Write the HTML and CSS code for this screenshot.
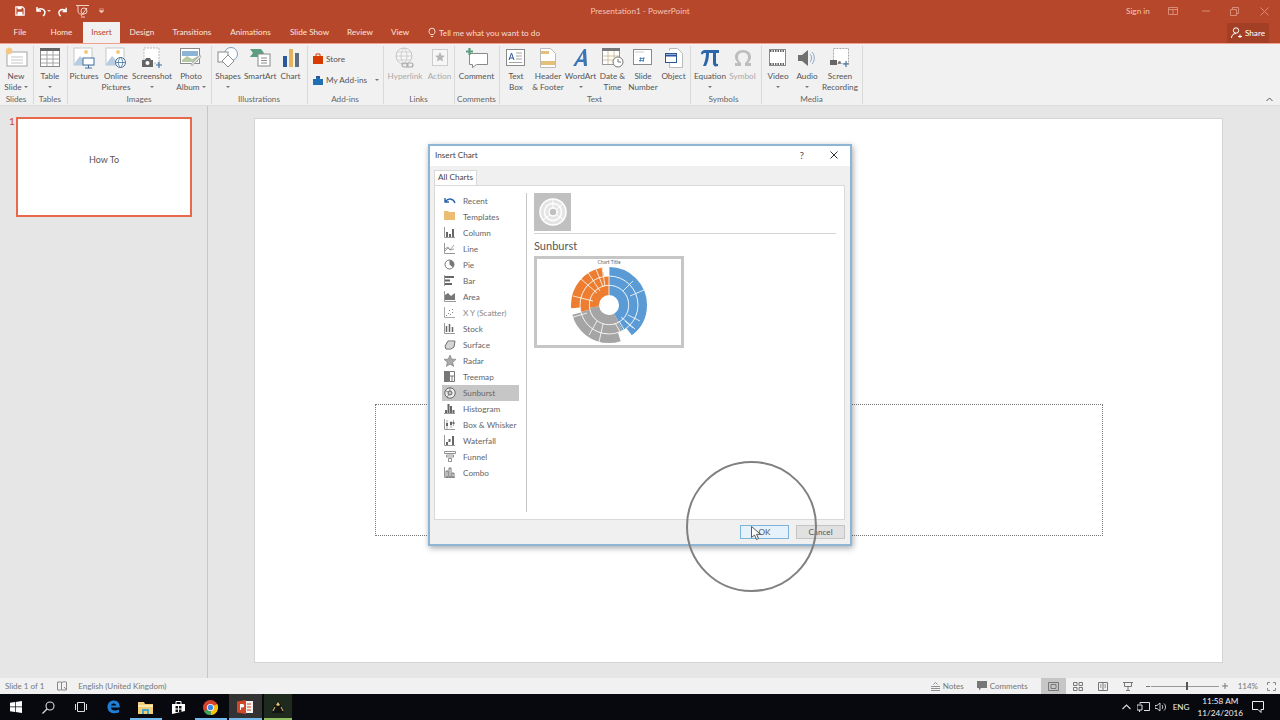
FILE: index.html
```html
<!DOCTYPE html>
<html lang="en">
<head>
  <meta charset="UTF-8">
  <title>Presentation1 - PowerPoint</title>
  <link rel="stylesheet" href="styles.css">
</head>
<body>
  <div class="title-bar">
    <div class="qat">
      <svg class="qat-save" width="10" height="10" viewBox="0 0 12 12"><path d="M1 1h8l2 2v8H1z" fill="none" stroke="#fff" stroke-width="1.4"/><path d="M3 1h5v3H3zM3 7h6v4H3z" fill="#fff"/></svg>
      <svg class="qat-undo" width="18" height="12" viewBox="0 0 18 12"><path d="M3 2v4h4M3 6c2-3 7-3 8 1 0 1.500-.5 3-2 4" fill="none" stroke="#fff" stroke-width="1.5"/><path d="M13 5h4l-2 2z" fill="#f3cfc4"/></svg>
      <svg class="qat-redo" width="11" height="11" viewBox="0 0 12 12"><path d="M10 2v4H6M10 6C8 3 3 3 2 7c0 1.500.5 3 2 4" fill="none" stroke="#fff" stroke-width="1.5"/></svg>
      <svg class="qat-show" width="14" height="14" viewBox="0 0 14 14"><path d="M0 1.500h13M2 2v5c0 2 1 3 3 3h3" fill="none" stroke="#f3cfc4"/><circle cx="8" cy="7" r="3" fill="none" stroke="#f3cfc4"/><path d="M5 12l6-8M5 13h4" stroke="#f3cfc4"/></svg>
      <svg class="qat-more" width="5" height="6" viewBox="0 0 6 7"><path d="M0 1h6M0 3h6l-3 3z" fill="#f3cfc4" stroke="#f3cfc4" stroke-width=".6"/></svg>
    </div>
    <div class="doc-title">Presentation1 - PowerPoint</div>
    <div class="win-controls">
      <span class="sign-in">Sign in</span>
      <svg class="win-ribbon" width="10" height="8" viewBox="0 0 10 8"><path d="M.5.500h9v7h-9zM.5 2.500h9M5 2.500v5" fill="none" stroke="#d98d79"/></svg>
      <svg class="win-min" width="8" height="2" viewBox="0 0 8 2"><path d="M0 1h8" stroke="#d98d79"/></svg>
      <svg class="win-max" width="9" height="9" viewBox="0 0 9 9"><path d="M.5 2.500h6v6h-6zM2.500 2.500v-2h6v6h-2" fill="none" stroke="#d98d79"/></svg>
      <svg class="win-close" width="9" height="9" viewBox="0 0 9 9"><path d="M.5.500l8 8M8.500.500l-8 8" stroke="#d98d79"/></svg>
    </div>
  </div>

  <div class="tab-bar">
    <span class="tab tab-file">File</span>
    <span class="tab tab-home">Home</span>
    <span class="tab tab-insert">Insert</span>
    <span class="tab tab-design">Design</span>
    <span class="tab tab-transitions">Transitions</span>
    <span class="tab tab-animations">Animations</span>
    <span class="tab tab-show">Slide Show</span>
    <span class="tab tab-review">Review</span>
    <span class="tab tab-view">View</span>
    <span class="tell-me">
      <svg width="8" height="11" viewBox="0 0 8 11"><path d="M2.500 7.500C1.500 6.500 1 5.500 1 4.200a3 3 0 0 1 6 0c0 1.300-.5 2.300-1.500 3.300zM2.800 9.500h2.400" fill="none" stroke="#f6dcd4"/></svg>
      Tell me what you want to do
    </span>
    <span class="share">
      <svg width="11" height="11" viewBox="0 0 11 11"><circle cx="5" cy="3.500" r="2.700" fill="none" stroke="#fff"/><path d="M.5 11c0-3 2-4.500 4.500-4.500M7 9.500h4M9 7.500v3.500" fill="none" stroke="#fff"/></svg>
      Share
    </span>
  </div>

  <div class="ribbon">
    <div class="group">
      <div class="group-items">
        <div class="rb w32">
          <svg class="rb-icon" width="24" height="22" viewBox="0 0 24 22"><rect x="3" y="5" width="20" height="14" fill="#fff" stroke="#a5a5a5"/><path d="M7 10h12M7 13h12M7 16h12" stroke="#c4c4c4"/><circle cx="5" cy="4" r="3" fill="#f5c77e"/><path d="M5 0v8M1 4h8M2 1l6 6M8 1L2 7" stroke="#f5c77e" stroke-width=".7"/></svg>
          <span>New<br>Slide <i class="caret"></i></span>
        </div>
      </div>
      <div class="group-label">Slides</div>
    </div>
    <div class="group">
      <div class="group-items">
        <div class="rb w32">
          <svg class="rb-icon" width="20" height="20" viewBox="0 0 20 20"><rect x=".5" y=".5" width="19" height="18" fill="#fff" stroke="#8a8a8a"/><path d="M0 1.500h20" stroke="#666" stroke-width="3"/><path d="M1 7h18M1 11h18M1 15h18M7 3v15M13 3v15" stroke="#a5a5a5"/></svg>
          <span>Table<br><i class="caret"></i></span>
        </div>
      </div>
      <div class="group-label">Tables</div>
    </div>
    <div class="group">
      <div class="group-items">
        <div class="rb w32">
          <svg class="rb-icon" width="22" height="22" viewBox="0 0 22 22"><rect x="1" y="1" width="18" height="17" fill="#fff" stroke="#c8c8c8"/><path d="M1 17l6-8 5 5 3-2 4 4v2H1z" fill="#b8cde2"/><circle cx="13" cy="5" r="2" fill="#f5c77e"/><rect x="10" y="11" width="11" height="7" fill="#fff" stroke="#41719c"/><path d="M15.500 18v3M12 21h7" stroke="#41719c"/></svg>
          <span>Pictures</span>
        </div>
        <div class="rb w32">
          <svg class="rb-icon" width="22" height="22" viewBox="0 0 22 22"><rect x="1" y="1" width="18" height="17" fill="#fff" stroke="#c8c8c8"/><path d="M1 17l6-8 5 5 3-2 4 4v2H1z" fill="#b8cde2"/><circle cx="13" cy="5" r="2" fill="#f5c77e"/><circle cx="15.500" cy="15.500" r="5" fill="#fff" stroke="#41719c"/><path d="M10.500 15.500h10M15.500 10.500c-3 3-3 7 0 10M15.500 10.500c3 3 3 7 0 10" fill="none" stroke="#41719c" stroke-width=".8"/></svg>
          <span>Online<br>Pictures</span>
        </div>
        <div class="rb w40">
          <svg class="rb-icon" width="22" height="22" viewBox="0 0 22 22"><rect x="3" y="1" width="15" height="15" fill="#fff" stroke="#bbb" stroke-dasharray="2 1"/><path d="M1 13h3l1-2h4l1 2h2v7H1z" fill="#666"/><circle cx="6.500" cy="16" r="2" fill="#fff"/><path d="M15 18h6M18 15v6" stroke="#41719c" stroke-width="1.200"/></svg>
          <span>Screenshot<br><i class="caret"></i></span>
        </div>
        <div class="rb w38">
          <svg class="rb-icon" width="22" height="20" viewBox="0 0 22 20"><rect x=".5" y=".5" width="19" height="15" fill="#fff" stroke="#8a8a8a"/><path d="M2 3h16v5H2z" fill="#8db4d8"/><path d="M2 12l5-4 5 3 6-3v6H2z" fill="#b6c9a5"/><path d="M12 18l9-9-1-2-9 9z" fill="#ddd" stroke="#999" stroke-width=".6"/></svg>
          <span>Photo<br>Album <i class="caret"></i></span>
        </div>
      </div>
      <div class="group-label">Images</div>
    </div>
    <div class="group">
      <div class="group-items">
        <div class="rb w32">
          <svg class="rb-icon" width="22" height="22" viewBox="0 0 22 22"><circle cx="14" cy="7" r="6.500" fill="#fff" stroke="#7f9db9"/><rect x="1" y="5" width="10" height="10" fill="#fff" stroke="#8a8a8a"/><path d="M11 8l6 6-6 6-6-6z" fill="#fff" stroke="#8a8a8a"/></svg>
          <span>Shapes<br><i class="caret"></i></span>
        </div>
        <div class="rb w31">
          <svg class="rb-icon" width="22" height="20" viewBox="0 0 22 20"><path d="M1 1h11l3 4-3 4H1l3-4z" fill="#5b9e80"/><rect x="9" y="6" width="12" height="12" fill="#fff" stroke="#8a8a8a"/><path d="M12 10h6M12 12.500h6M12 15h6" stroke="#8a8a8a"/></svg>
          <span>SmartArt</span>
        </div>
        <div class="rb w31">
          <svg class="rb-icon" width="18" height="20" viewBox="0 0 18 20"><rect x="1" y="8" width="4" height="11" fill="#2b579a"/><rect x="7" y="1" width="4" height="18" fill="#e5b35d"/><rect x="13" y="5" width="4" height="14" fill="#5f6e7e"/></svg>
          <span>Chart</span>
        </div>
      </div>
      <div class="group-label">Illustrations</div>
    </div>
    <div class="group">
      <div class="group-items addins">
        <div class="addin">
          <svg width="10" height="11" viewBox="0 0 10 11"><path d="M0 3h10v8H0z" fill="#d83b01"/><path d="M3 3V1h4v2" fill="none" stroke="#d83b01"/></svg>
          <span>Store</span>
        </div>
        <div class="addin">
          <svg width="10" height="10" viewBox="0 0 10 10"><path d="M0 4h3V2h4v2h3v6H0z" fill="#1f6fb5"/><path d="M3 1h4v2H3z" fill="#2b579a"/></svg>
          <span>My Add-ins</span>
          <i class="caret caret-addin"></i>
        </div>
      </div>
      <div class="group-label">Add-ins</div>
    </div>
    <div class="group">
      <div class="group-items">
        <div class="rb w42 off">
          <svg class="rb-icon" width="20" height="22" viewBox="0 0 20 22"><circle cx="9" cy="9" r="8" fill="#f6f6f6" stroke="#c6c6c6"/><path d="M1 9h16M9 1c-4 4-4 12 0 16M9 1c4 4 4 12 0 16M2 5h14M2 13h14" fill="none" stroke="#c6c6c6" stroke-width=".8"/><rect x="7" y="16" width="6" height="4" rx="2" fill="none" stroke="#aaa" stroke-width="1.200"/><rect x="12" y="16" width="6" height="4" rx="2" fill="none" stroke="#aaa" stroke-width="1.200"/></svg>
          <span>Hyperlink</span>
        </div>
        <div class="rb w27 off">
          <svg class="rb-icon" width="16" height="18" viewBox="0 0 16 18"><rect x=".5" y=".5" width="15" height="16" fill="#f6f6f6" stroke="#ccc"/><path d="M8 3l1.500 3.500 3.500.3-2.700 2.300.9 3.500L8 10.700 4.800 12.600l.9-3.500L3 6.800l3.500-.3z" fill="#b5b5b5"/></svg>
          <span>Action</span>
        </div>
      </div>
      <div class="group-label">Links</div>
    </div>
    <div class="group">
      <div class="group-items">
        <div class="rb w43">
          <svg class="rb-icon" width="22" height="20" viewBox="0 0 22 20"><path d="M3.500 5.500h18v11h-11l-4 3v-3h-3z" fill="#fff" stroke="#8a8a8a"/><path d="M0 3.500h7M3.500 0v7" stroke="#5b9e80" stroke-width="2.200"/></svg>
          <span>Comment</span>
        </div>
      </div>
      <div class="group-label">Comments</div>
    </div>
    <div class="group">
      <div class="group-items">
        <div class="rb w32">
          <svg class="rb-icon" width="20" height="18" viewBox="0 0 20 18"><rect x=".5" y=".5" width="18" height="16" fill="#fff" stroke="#8a8a8a"/><path d="M3 11l2.500-7L8 11M4 9h3" fill="none" stroke="#2b579a"/><path d="M10 4h6M10 7h6M10 10h6M3 13.500h13" stroke="#a5a5a5"/></svg>
          <span>Text<br>Box</span>
        </div>
        <div class="rb w32">
          <svg class="rb-icon" width="16" height="20" viewBox="0 0 16 20"><path d="M.5.500h10l5 5v14H.5z" fill="#fff" stroke="#bbb"/><rect x="1" y="3" width="8" height="3" fill="#e5c07a"/><rect x="1" y="13" width="14" height="4" fill="#e5c07a"/></svg>
          <span>Header<br>&amp; Footer</span>
        </div>
        <div class="rb w33">
          <svg class="rb-icon" width="18" height="20" viewBox="0 0 18 20"><path d="M1 18L12 1h2l1 17h-3l-.5-4H6l-2 4zM7.500 11.500h3.800L11 5z" fill="#3a75b5"/></svg>
          <span>WordArt<br><i class="caret"></i></span>
        </div>
        <div class="rb w31">
          <svg class="rb-icon" width="22" height="20" viewBox="0 0 22 20"><rect x=".5" y=".5" width="17" height="16" fill="#fff" stroke="#999"/><path d="M0 1.500h18" stroke="#777" stroke-width="3"/><path d="M1 8h16M1 12h16M6 3v13M12 3v13" stroke="#c9b187" stroke-width=".8"/><circle cx="16" cy="14" r="5" fill="#fff" stroke="#777"/><path d="M16 11v3h3" fill="none" stroke="#777"/></svg>
          <span>Date &amp;<br>Time</span>
        </div>
        <div class="rb w30">
          <svg class="rb-icon" width="20" height="18" viewBox="0 0 20 18"><rect x=".5" y=".5" width="18" height="15" fill="#fff" stroke="#8a8a8a"/><path d="M2 3h9" stroke="#ccc"/><path d="M8 8l-1 5M11 8l-1 5M6.500 9.500h5M6 11.500h5" stroke="#3a75b5" stroke-width=".8"/></svg>
          <span>Slide<br>Number</span>
        </div>
        <div class="rb w31">
          <svg class="rb-icon" width="18" height="20" viewBox="0 0 18 20"><path d="M4.500 2.500V.500h8l5 5v14h-13V15" fill="#fff" stroke="#bbb"/><rect x=".5" y="5.500" width="11" height="9" fill="#fff" stroke="#2b579a"/><path d="M1 7.500h10" stroke="#2b579a" stroke-width="2"/></svg>
          <span>Object</span>
        </div>
      </div>
      <div class="group-label">Text</div>
    </div>
    <div class="group group-symbols">
      <div class="group-items">
        <div class="rb w38">
          <svg class="rb-icon" width="20" height="18" viewBox="0 0 20 18"><path d="M1 5c0-3 2-4 4-4h14v3h-3v9c0 2 .5 2 2 2v2c-3 1-5 0-5-3V4H9c0 5-1 9-3 13H3C5 13 6 8 6 4 4 4 3 4 2.500 5.500z" fill="#2b66a8"/></svg>
          <span>Equation<br><i class="caret"></i></span>
        </div>
        <div class="rb w27 off">
          <svg class="rb-icon" width="18" height="18" viewBox="0 0 18 18"><path d="M1 17v-3h3C2 12 1 10 1 8c0-4 3-7 8-7s8 3 8 7c0 2-1 4-3 6h3v3h-6v-3c2-1.500 3-3.500 3-6 0-3-2-4.500-5-4.500S4 5 4 8c0 2.500 1 4.500 3 6v3z" fill="#bdbdbd"/></svg>
          <span>Symbol</span>
        </div>
      </div>
      <div class="group-label">Symbols</div>
    </div>
    <div class="group group-last">
      <div class="group-items">
        <div class="rb w32">
          <svg class="rb-icon" width="18" height="18" viewBox="0 0 18 18"><rect x=".5" y=".5" width="16" height="16" fill="#fff" stroke="#8a8a8a"/><path d="M1 2h15M1 15h15" stroke="#666" stroke-width="2" stroke-dasharray="1.500 1"/></svg>
          <span>Video<br><i class="caret"></i></span>
        </div>
        <div class="rb w26">
          <svg class="rb-icon" width="18" height="18" viewBox="0 0 18 18"><path d="M0 6h4l6-5v16l-6-5H0z" fill="#707070"/><path d="M12 5c2 2 2 6 0 8M14 3c3 3 3 9 0 12" fill="none" stroke="#8aa9c9"/></svg>
          <span>Audio<br><i class="caret"></i></span>
        </div>
        <div class="rb w40">
          <svg class="rb-icon" width="20" height="20" viewBox="0 0 20 20"><rect x="3.500" y=".5" width="15" height="15" fill="#fff" stroke="#aaa" stroke-dasharray="2 1"/><rect x="0" y="12" width="7" height="5" fill="#666"/><circle cx="9.500" cy="14.500" r="1.500" fill="#777"/><path d="M13 16h6M16 13v6" stroke="#41719c" stroke-width="1.200"/></svg>
          <span>Screen<br>Recording</span>
        </div>
      </div>
      <div class="group-label">Media</div>
    </div>
    <svg class="collapse" width="7" height="5" viewBox="0 0 7 5"><path d="M.5 4l3-3 3 3" fill="none" stroke="#555"/></svg>
  </div>

  <div class="workspace">
    <div class="thumbs">
      <span class="thumb-num">1</span>
      <div class="thumb">How To</div>
    </div>
    <div class="editor">
      <div class="slide">
        <div class="placeholder"></div>
      </div>
    </div>
  </div>

  <div class="status-bar">
    <span class="st-slide">Slide 1 of 1</span>
    <svg class="st-notes-ico" width="10" height="10" viewBox="0 0 10 10"><path d="M.5 1h4v8h-4zM5 1.500C6 .500 8 .500 9.500 1v8H5M7 6l2 2" fill="none" stroke="#888"/></svg>
    <span class="st-lang">English (United Kingdom)</span>
    <span class="st-right">
      <span class="st-item">
        <svg width="9" height="9" viewBox="0 0 9 9"><path d="M0 4.500h9M0 6.500h9M0 8.500h9M2.500 2.500L4.500 .500l2 2" fill="none" stroke="#777" stroke-width=".8"/></svg>
        Notes
      </span>
      <span class="st-item st-comments">
        <svg width="10" height="10" viewBox="0 0 10 10"><path d="M0 0h10v7H4L2 9.500V7H0z" fill="#777"/></svg>
        Comments
      </span>
      <span class="view-btn view-on"><svg width="11" height="9" viewBox="0 0 11 9"><path d="M.5.500h10v8H.5zM3 2.500h5v4H3z" fill="none" stroke="#777"/></svg></span>
      <span class="view-btn"><svg width="10" height="9" viewBox="0 0 10 9"><path d="M.5.500h3.500v3H.5zM6 .500h3.500v3H6zM.5 5.500h3.500v3H.5zM6 5.500h3.500v3H6z" fill="none" stroke="#777"/></svg></span>
      <span class="view-btn"><svg width="10" height="9" viewBox="0 0 10 9"><path d="M.5.500h9v8h-9zM5 .500v8M2 3h1.500M2 5h1.500M6.500 3H8M6.500 5H8" fill="none" stroke="#777"/></svg></span>
      <span class="view-btn"><svg width="10" height="9" viewBox="0 0 10 9"><path d="M0 .500h10M1.500 1v3.500h7V1M5 4.500V8M3 8.500h4" fill="none" stroke="#777"/></svg></span>
      <span class="zoom-minus"></span>
      <span class="zoom-slider"><i class="zoom-thumb"></i></span>
      <svg class="zoom-plus" width="6" height="6" viewBox="0 0 6 6"><path d="M0 3h6M3 0v6" stroke="#777"/></svg>
      <span class="zoom-pct">114%</span>
      <svg class="zoom-fit" width="9" height="9" viewBox="0 0 9 9"><path d="M.5 3V.500H3M6 .500h2.500V3M8.500 6v2.500H6M3 8.500H.500V6" fill="none" stroke="#888"/></svg>
    </span>
  </div>

  <div class="taskbar">
    <span class="tb-btn tb-start"><svg width="12" height="12" viewBox="0 0 12 12"><path d="M0 1.700l5-.7v4.600H0zM5.700.900L12 0v5.600H5.700zM0 6.300h5V11l-5-.7zM5.700 6.300H12V12l-6.300-.9z" fill="#fff"/></svg></span>
    <span class="tb-btn"><svg width="13" height="13" viewBox="0 0 13 13"><circle cx="8" cy="5" r="4" fill="none" stroke="#ddd" stroke-width="1.100"/><path d="M5 8l-4.500 4.500" stroke="#ddd" stroke-width="1.200"/></svg></span>
    <span class="tb-btn"><svg width="14" height="10" viewBox="0 0 14 10"><path d="M3.500.500h7v9h-7zM1.500 2v6M12.500 2v6" fill="none" stroke="#ddd"/></svg></span>
    <span class="tb-btn"><svg width="13" height="14" viewBox="0 0 13 14"><path d="M.5 7C.5 3 3 .500 7 .500s5.800 3 5.800 7H4c0 3 4 4 8 2v3c-5 2-11.500.500-11.500-5.500zM4 5.500h5.300C9 3 5 2.700 4 5.500z" fill="#1f7fd6"/></svg></span>
    <span class="tb-btn tb-open"><svg width="15" height="13" viewBox="0 0 15 13"><path d="M0 1h6l1 2h8v10H0z" fill="#f2cf76"/><path d="M0 4h15v2H0z" fill="#fbe8ae"/><path d="M4 13V8h7v5H9v-3H6v3z" fill="#49a7c9"/></svg></span>
    <span class="tb-btn"><svg width="13" height="14" viewBox="0 0 13 14"><path d="M0 4h13v7l-13 3z" fill="#fff"/><path d="M4 4V1.500h5V4" fill="none" stroke="#fff"/><path d="M3.500 6h2.500v2.500H3.500zM7 6h2.500v2.500H7zM3.500 9.500h2.500V12H3.500zM7 9.500h2.500V12H7z" fill="#111"/></svg></span>
    <span class="tb-btn tb-open"><svg width="15" height="15" viewBox="0 0 15 15"><circle cx="7.500" cy="7.500" r="7.500" fill="#d8432f"/><path d="M7.500 7.500L1 11.200A7.500 7.500 0 0 0 8 15z" fill="#3ba55c"/><path d="M7.500 7.500L8 15A7.500 7.500 0 0 0 14.200 4z" fill="#f4c20d"/><circle cx="7.500" cy="7.500" r="3.600" fill="#fff"/><circle cx="7.500" cy="7.500" r="2.700" fill="#3f86ea"/></svg></span>
    <span class="tb-btn tb-open tb-active"><svg width="16" height="14" viewBox="0 0 16 14"><rect x="5" y="1" width="11" height="12" fill="#f3f3f3"/><path d="M10 4h4M10 7h4M10 10h4" stroke="#d24726"/><path d="M0 1.500L9 0v14L0 12.500z" fill="#d24726"/><path d="M3 4h2.500a1.700 1.700 0 0 1 0 3.500H4V10H3z" fill="#fff"/></svg></span>
    <span class="tb-btn tb-open tb-app"><svg width="14" height="14" viewBox="0 0 14 14"><path d="M1 13l3-8 3-4 3 4 3 8z" fill="#141414"/><path d="M5 5l2-3 2 3-2 1z" fill="#e7c66a"/><path d="M2 11l2-4M12 11l-2-4" stroke="#e7c66a"/></svg></span>
    <span class="tray">
      <svg class="tray-up" width="9" height="6" viewBox="0 0 9 6"><path d="M.5 5l4-4 4 4" fill="none" stroke="#ddd" stroke-width="1.100"/></svg>
      <svg class="tray-net" width="13" height="11" viewBox="0 0 13 11"><path d="M3 2V.500h9.500v8H7M0 3h5v5H0zM2.500 8v2" fill="none" stroke="#ddd"/></svg>
      <svg class="tray-vol" width="12" height="10" viewBox="0 0 12 10"><path d="M0 3.500h2L5 1v8L2 6.500H0zM7 3c1 1 1 3 0 4M9 1.500c2 2 2 5 0 7" fill="none" stroke="#ddd" stroke-width=".9"/></svg>
      <span class="tray-lang">ENG</span>
      <span class="clock">11:58 AM<br>11/24/2016</span>
      <svg class="tray-note" width="12" height="12" viewBox="0 0 12 12"><path d="M.5.500h11v8H9v3l-3-3H.5z" fill="none" stroke="#eee"/></svg>
    </span>
  </div>

  <!-- dialog window, sits over the slide -->
  <div class="dialog">
    <div class="dlg-title">
      <span class="dlg-name">Insert Chart</span>
      <span class="dlg-help">?</span>
      <svg class="dlg-close" width="8" height="8" viewBox="0 0 8 8"><path d="M.5.500l7 7M7.500.500l-7 7" stroke="#333"/></svg>
    </div>
    <div class="dlg-tabs"><span class="dlg-tab">All Charts</span></div>
    <div class="dlg-body">
      <ul class="chart-types">
        <li><svg width="12" height="12" viewBox="0 0 12 12"><path d="M1 3v4h4M1.500 6.500C4 3 9 3 11 8" fill="none" stroke="#2b66a8" stroke-width="1.400"/></svg>Recent</li>
        <li><svg width="11" height="9" viewBox="0 0 11 9"><path d="M0 0h4l1 1h6v8H0z" fill="#eabd73"/></svg>Templates</li>
        <li><svg width="11" height="11" viewBox="0 0 11 11"><path d="M.5 0v10.500H11" fill="none" stroke="#999"/><path d="M2 5h2v5H2zM5 7h2v3H5zM8 2h2v8H8z" fill="#666"/></svg>Column</li>
        <li><svg width="11" height="11" viewBox="0 0 11 11"><path d="M.5 0v10.500H11" fill="none" stroke="#999"/><path d="M1 8l3-3 2 2 4-5M1 6l3-2 2 3 4-1" fill="none" stroke="#888" stroke-width=".8"/></svg>Line</li>
        <li><svg width="11" height="11" viewBox="0 0 11 11"><circle cx="5.500" cy="5.500" r="4.500" fill="#fff" stroke="#777"/><path d="M5.500 5.500V1a4.500 4.500 0 0 1 3.500 7.500z" fill="#777"/></svg>Pie</li>
        <li><svg width="11" height="11" viewBox="0 0 11 11"><path d="M.5 0v11" stroke="#999"/><path d="M1 1h9v2H1zM1 4.500h5v2H1zM1 8h7v2H1z" fill="#666"/></svg>Bar</li>
        <li><svg width="12" height="11" viewBox="0 0 12 11"><path d="M.5 0v10.500H12" fill="none" stroke="#999"/><path d="M1 9V4l3-2 3 3 4-3v7z" fill="#777"/></svg>Area</li>
        <li class="faint"><svg width="11" height="11" viewBox="0 0 11 11"><path d="M.5 0v10.500H11" fill="none" stroke="#aaa"/><path d="M2 8h1v1H2zM4 6h1v1H4zM6 7h1v1H6zM5 3h1v1H5zM8 2h1v1H8zM8 5h1v1H8z" fill="#888"/></svg>X Y (Scatter)</li>
        <li><svg width="11" height="11" viewBox="0 0 11 11"><path d="M.5 0v10.500H11" fill="none" stroke="#999"/><path d="M2.500 3v6M5.500 1v8M8.500 4v5" stroke="#666" stroke-width="1.500"/></svg>Stock</li>
        <li><svg width="12" height="11" viewBox="0 0 12 11"><path d="M1 7l3-5h7l-1 6-3 2H2z" fill="#fff" stroke="#666"/><path d="M2 6h8M3 4h8M1.500 8h8" stroke="#888" stroke-width=".7"/></svg>Surface</li>
        <li><svg width="12" height="12" viewBox="0 0 12 12"><path d="M6 0l1.700 4 4.300.4-3.300 2.800 1 4.300L6 9.200 2.300 11.500l1-4.300L0 4.400 4.300 4z" fill="#aaa" stroke="#666" stroke-width=".5"/></svg>Radar</li>
        <li><svg width="11" height="11" viewBox="0 0 11 11"><path d="M0 0h5v11H0z" fill="#777"/><path d="M5.500.500h5v10h-5zM5.500 5h5M8 5v5" fill="none" stroke="#777"/></svg>Treemap</li>
        <li class="picked"><svg width="12" height="12" viewBox="0 0 12 12"><circle cx="6" cy="6" r="5.200" fill="#eee" stroke="#666"/><circle cx="6" cy="6" r="2" fill="#c6c6c6" stroke="#666"/><path d="M6 1v3M2 4l2.500 1M3 10l2-2.500" stroke="#666" stroke-width=".7"/></svg>Sunburst</li>
        <li><svg width="11" height="11" viewBox="0 0 11 11"><path d="M0 10.500h11" stroke="#999"/><path d="M1 7h2v3H1zM3.500 1h2v9h-2zM6 3h2v7H6zM8.500 7h2v3h-2z" fill="#666"/></svg>Histogram</li>
        <li><svg width="11" height="11" viewBox="0 0 11 11"><path d="M.5 0v10.500H11" fill="none" stroke="#999"/><path d="M3 1v9M7 2v7M9.500 1v6" stroke="#888" stroke-width=".7"/><path d="M2 4h2v3H2zM6 3h2v3H6zM8.500 3h2v2h-2z" fill="#666"/></svg>Box &amp; Whisker</li>
        <li><svg width="11" height="11" viewBox="0 0 11 11"><path d="M.5 0v10.500H11" fill="none" stroke="#999"/><path d="M2 7h2v3H2zM4.500 4h2v3h-2zM8 1h2v9H8z" fill="#666"/></svg>Waterfall</li>
        <li><svg width="12" height="11" viewBox="0 0 12 11"><path d="M.5 .500h11v2h-11zM2.500 4h7v2h-7zM4.500 7.500h3v3h-3z" fill="#fff" stroke="#777" stroke-width=".8"/></svg>Funnel</li>
        <li><svg width="11" height="11" viewBox="0 0 11 11"><path d="M.5 0v10.500H11" fill="none" stroke="#999"/><path d="M2 4h2v6H2zM5 1h2v9H5zM8 6h2v4H8z" fill="none" stroke="#666" stroke-width=".9"/></svg>Combo</li>
      </ul>
      <div class="chart-pane">
        <div class="subtypes">
          <span class="subtype">
            <svg width="32" height="32" viewBox="0 0 32 32"><circle cx="16" cy="16" r="13" fill="#e4e4e4" stroke="#fff" stroke-width="1.500"/><circle cx="16" cy="16" r="8.500" fill="#e4e4e4" stroke="#fff" stroke-width="1.500"/><circle cx="16" cy="16" r="4" fill="#c0c0c0" stroke="#fff" stroke-width="1.500"/><path d="M16 3v9M26 8l-6 5M27 24l-7-5M6 24l7-5" stroke="#fff"/></svg>
          </span>
        </div>
        <h2 class="pane-heading">Sunburst</h2>
        <div class="preview">
          <div class="preview-title">Chart Title</div>
          <svg class="sunburst" width="144" height="85" viewBox="0 0 144 85">
            <g transform="rotate(-90 72 46)" fill="none">
              <!-- ring 1 -->
              <circle cx="72" cy="46" r="15" pathLength="360" stroke="#5b9bd5" stroke-width="10" stroke-dasharray="150 360"/>
              <circle cx="72" cy="46" r="15" pathLength="360" stroke="#a5a5a5" stroke-width="10" stroke-dasharray="112 360" stroke-dashoffset="-150"/>
              <circle cx="72" cy="46" r="15" pathLength="360" stroke="#ed7d31" stroke-width="10" stroke-dasharray="98 360" stroke-dashoffset="-262"/>
              <!-- ring 2 -->
              <circle cx="72" cy="46" r="24.500" pathLength="360" stroke="#5b9bd5" stroke-width="9" stroke-dasharray="152 360"/>
              <circle cx="72" cy="46" r="24.500" pathLength="360" stroke="#a5a5a5" stroke-width="9" stroke-dasharray="104 360" stroke-dashoffset="-152"/>
              <circle cx="72" cy="46" r="24.500" pathLength="360" stroke="#ed7d31" stroke-width="9" stroke-dasharray="104 360" stroke-dashoffset="-256"/>
              <!-- ring 3 -->
              <circle cx="72" cy="46" r="33.500" pathLength="360" stroke="#5b9bd5" stroke-width="9" stroke-dasharray="143 360"/>
              <circle cx="72" cy="46" r="33.500" pathLength="360" stroke="#a5a5a5" stroke-width="9" stroke-dasharray="93 360" stroke-dashoffset="-162"/>
              <circle cx="72" cy="46" r="33.500" pathLength="360" stroke="#ed7d31" stroke-width="9" stroke-dasharray="85 360" stroke-dashoffset="-265"/>
              <!-- ring edges -->
              <circle cx="72" cy="46" r="19.700" stroke="#fff" stroke-width=".8"/>
              <circle cx="72" cy="46" r="29" stroke="#fff" stroke-width=".8"/>
            </g>
            <g stroke="#fff" stroke-width=".8">
              <path d="M72 8v28M93 37l14-6M86 32l10-10M84 58l14 12M78 64l8 14M88 62l8 7M91 56l12 6"/>
              <path d="M60 62l-8 14M50 54l-17 5M66 65l-4 18M82 62l6 10"/>
              <path d="M60 34l-16-14M56 42l-20-5M66 28l-7-18M68 27l-3-18M63 32L50 12"/>
            </g>
          </svg>
        </div>
      </div>
    </div>
    <div class="dlg-foot">
      <span class="dlg-btn dlg-ok">OK</span>
      <span class="dlg-btn">Cancel</span>
    </div>
  </div>

  <!-- click highlight and pointer from the screen recording -->
  <div class="click-ring"></div>
  <svg class="pointer" width="11" height="15" viewBox="0 0 11 15"><path d="M.5.500v11l3-2.500 2 4.500 2-1-2-4.200h4z" fill="#fff" stroke="#333" stroke-width=".8"/></svg>
</body>
</html>
```

FILE: styles.css
```css
* {
  box-sizing: border-box;
}
body {
  margin: 0;
  width: 1280px;
  height: 720px;
  overflow: hidden;
  display: flex;
  flex-direction: column;
  position: relative;
  font-family: Lato, "Open Sans", sans-serif;
  font-size: 8.200px;
  color: #555;
  background: #e6e6e6;
}
svg {
  display: block;
  flex: none;
}

/* title bar */
.title-bar {
  height: 22px;
  background: #b7472a;
  display: flex;
  align-items: center;
  flex: none;
}
.qat {
  width: 300px;
  display: flex;
  align-items: center;
  padding-left: 15px;
}
.qat-undo { margin-left: 9px; }
.qat-redo { margin-left: 5px; }
.qat-show { margin-left: 8px; }
.qat-more { margin-left: 9px; }
.doc-title {
  width: 680px;
  text-align: center;
  color: #f3c4b6;
}
.win-controls {
  flex: 1;
  display: flex;
  align-items: center;
  color: #f3c4b6;
}
.sign-in { margin-left: 146px; }
.win-ribbon { margin-left: 18px; }
.win-min { margin-left: 24px; }
.win-max { margin-left: 20px; }
.win-close { margin-left: 21px; }

/* ribbon tabs */
.tab-bar {
  height: 21px;
  background: #b7472a;
  display: flex;
  align-items: center;
  color: #fbe5de;
  flex: none;
}
.tab {
  height: 21px;
  line-height: 21px;
  text-align: center;
}
.tab-file { width: 40px; }
.tab-home { width: 43px; }
.tab-insert { width: 37px; background: #f1f1f1; color: #b7472a; }
.tab-design { width: 44px; }
.tab-transitions { width: 56px; }
.tab-animations { width: 61px; }
.tab-show { width: 57px; }
.tab-review { width: 44px; }
.tab-view { width: 36px; }
.tell-me {
  display: flex;
  align-items: center;
  gap: 3px;
  margin-left: 10px;
  color: #f6dcd4;
}
.share {
  margin-left: auto;
  margin-right: 11px;
  width: 42px;
  height: 20px;
  background: #a33f25;
  color: #fff;
  display: flex;
  align-items: center;
  justify-content: center;
  gap: 3px;
}

/* ribbon */
.ribbon {
  height: 63px;
  background: #f1f1f1;
  border-top: 1px solid #f0a08c;
  border-bottom: 1px solid #dcdcdc;
  display: flex;
  flex: none;
}
.group {
  display: flex;
  flex-direction: column;
  margin-top: 2px;
  height: 58px;
  border-right: 1px solid #d9d9d9;
  padding-right: 1px;
}
.group-symbols {
  padding-right: 5px;
}
.group-last {
  width: 101px;
}
.group-items {
  display: flex;
  flex: 1;
}
.group-label {
  height: 11px;
  line-height: 12px;
  text-align: center;
  color: #666;
}
.rb {
  text-align: center;
  line-height: 10.500px;
  color: #555;
  white-space: nowrap;
}
.rb-icon {
  height: 22px;
  margin: 1px auto 2px;
}
.off {
  color: #aaa;
}
.w26 { width: 26px; }
.w27 { width: 27px; }
.w30 { width: 30px; }
.w31 { width: 31px; }
.w32 { width: 32px; }
.w33 { width: 33px; }
.w38 { width: 38px; }
.w40 { width: 40px; }
.w42 { width: 42px; }
.w43 { width: 43px; }
.caret {
  display: inline-block;
  width: 0;
  height: 0;
  border: 2px solid transparent;
  border-top: 2px solid #777;
  border-bottom: 0;
  vertical-align: middle;
}
.addins {
  flex-direction: column;
  width: 74px;
  padding: 7px 0 0 5px;
  gap: 11px;
}
.addin {
  display: flex;
  align-items: center;
  gap: 3px;
  color: #555;
  white-space: nowrap;
}
.caret-addin {
  margin-left: 5px;
}
.collapse {
  margin: auto 7px 3px auto;
}

/* main area */
.workspace {
  flex: 1;
  display: flex;
  min-height: 0;
}
.thumbs {
  width: 208px;
  border-right: 1px solid #c6c6c6;
  padding: 11px 0 0 16px;
  position: relative;
}
.thumb-num {
  position: absolute;
  left: 9px;
  top: 9px;
  color: #d24726;
  font-size: 10px;
}
.thumb {
  width: 176px;
  height: 100px;
  padding-bottom: 16px;
  background: #fff;
  border: 2px solid #e8694a;
  display: flex;
  align-items: center;
  justify-content: center;
  font-size: 9px;
  color: #555;
}
.editor {
  flex: 1;
  padding: 12px 0 0 46px;
}
.slide {
  width: 969px;
  height: 545px;
  background: #fff;
  border: 1px solid #d4d4d4;
  padding: 285px 0 0 120px;
}
.placeholder {
  width: 728px;
  height: 132px;
  border: 1px dotted #777;
}

/* status bar */
.status-bar {
  height: 16px;
  background: #f1f1f1;
  display: flex;
  align-items: center;
  padding-left: 5px;
  color: #777;
  font-size: 8px;
  flex: none;
}
.st-notes-ico { margin-left: 13px; }
.st-lang { margin-left: 11px; }
.st-right {
  margin-left: auto;
  display: flex;
  align-items: center;
  height: 16px;
}
.st-item {
  display: flex;
  align-items: center;
  gap: 3px;
}
.st-comments { margin-left: 13px; margin-right: 13px; }
.view-btn {
  width: 25px;
  height: 16px;
  display: flex;
  align-items: center;
  justify-content: center;
}
.view-on { background: #c6c6c6; }
.zoom-minus {
  width: 4px;
  height: 1px;
  margin: 0 1px 0 5px;
  background: #777;
}
.zoom-slider {
  width: 68px;
  height: 1px;
  background: #999;
  position: relative;
}
.zoom-thumb {
  position: absolute;
  left: 35px;
  top: -4px;
  width: 2px;
  height: 8px;
  background: #555;
}
.zoom-plus { margin-left: 3px; }
.zoom-pct { margin-left: 10px; }
.zoom-fit { margin: 0 4px 0 9px; }

/* taskbar */
.taskbar {
  height: 26px;
  background: #07090e;
  display: flex;
  align-items: center;
  color: #eee;
  flex: none;
}
.tb-btn {
  width: 32.500px;
  height: 26px;
  display: flex;
  align-items: center;
  justify-content: center;
}
.tb-start { width: 32px; }
.tb-open { box-shadow: inset 0 -2px 0 #76b9ed; }
.tb-active { background: #333; margin-left: 2px; }
.tb-app { background: #1e2a1e; box-shadow: inset 0 -2px 0 #8fbf5f; width: 28px; margin-left: 2px; }
.tray {
  margin-left: auto;
  display: flex;
  align-items: center;
  height: 26px;
}
.tray-net { margin-left: 6px; }
.tray-vol { margin-left: 5px; }
.tray-lang { margin-left: 6px; }
.clock {
  margin-left: 8px;
  text-align: center;
  line-height: 12px;
}
.tray-note { margin: 0 16px 0 9px; }

/* insert chart dialog */
.dialog {
  position: absolute;
  left: 428px;
  top: 144px;
  width: 424px;
  height: 402px;
  background: #f0f0f0;
  border: 2px solid #8db5d6;
  box-shadow: 1px 2px 6px rgba(0,0,0,0.35);
  display: flex;
  flex-direction: column;
  color: #555;
}
.dlg-title {
  height: 20px;
  padding: 0 0 2px 5px;
  background: #fff;
  display: flex;
  align-items: center;
  flex: none;
}
.dlg-name { color: #444; }
.dlg-help { margin-left: auto; font-size: 10px; }
.dlg-close { margin: 0 12px 0 26px; }
.dlg-tabs {
  height: 19px;
  padding: 4px 0 0 4px;
  flex: none;
}
.dlg-tab {
  display: block;
  width: 43px;
  height: 15px;
  line-height: 13px;
  text-align: center;
  background: #fff;
  border: 1px solid #d9d9d9;
  border-bottom: 0;
  color: #444;
}
.dlg-body {
  height: 335px;
  margin: 0 5px 0 4px;
  background: #fff;
  border: 1px solid #d9d9d9;
  display: flex;
  padding: 7px 0 0 7px;
  flex: none;
}
.chart-types {
  list-style: none;
  margin: 0;
  padding: 0;
  width: 85px;
  height: 319px;
  border-right: 1px solid #c6c6c6;
  color: #666;
}
.chart-types li {
  width: 77px;
  height: 16px;
  display: flex;
  align-items: center;
  padding-left: 2px;
  position: relative;
  text-indent: 19px;
  white-space: nowrap;
}
.chart-types li svg {
  position: absolute;
  left: 2px;
  top: 2px;
}
.chart-types .picked { background: #c6c6c6; }
.chart-types .faint { color: #888; }
.chart-pane {
  flex: 1;
  padding: 0 8px 0 7px;
}
.subtypes {
  height: 41px;
  border-bottom: 1px solid #d4d4d4;
}
.subtype {
  display: flex;
  align-items: center;
  justify-content: center;
  width: 37px;
  height: 38px;
  background: #c0c0c0;
}
.pane-heading {
  margin: 4px 0 3px;
  font-size: 11px;
  line-height: 15px;
  font-weight: normal;
  color: #555;
}
.preview {
  width: 150px;
  height: 92px;
  border: 3px solid #c6c6c6;
  position: relative;
}
.preview-title {
  text-align: center;
  font-size: 5px;
  line-height: 6px;
  color: #666;
  position: relative;
  z-index: 1;
}
.sunburst {
  position: absolute;
  left: 0;
  top: 0;
}
.dlg-foot {
  flex: 1;
  display: flex;
  justify-content: flex-end;
  align-items: center;
  gap: 7px;
  padding: 0 5px 0 0;
}
.dlg-btn {
  width: 49px;
  height: 14px;
  line-height: 12px;
  text-align: center;
  background: #e1e1e1;
  border: 1px solid #c4c4c4;
  color: #555;
}
.dlg-ok {
  background: #e5f1fb;
  border-color: #7fb4d9;
}

/* overlays */
.click-ring {
  position: absolute;
  left: 686px;
  top: 461px;
  width: 131px;
  height: 131px;
  border: 2px solid #808080;
  border-radius: 50%;
}
.pointer {
  position: absolute;
  left: 751px;
  top: 526px;
}
```
